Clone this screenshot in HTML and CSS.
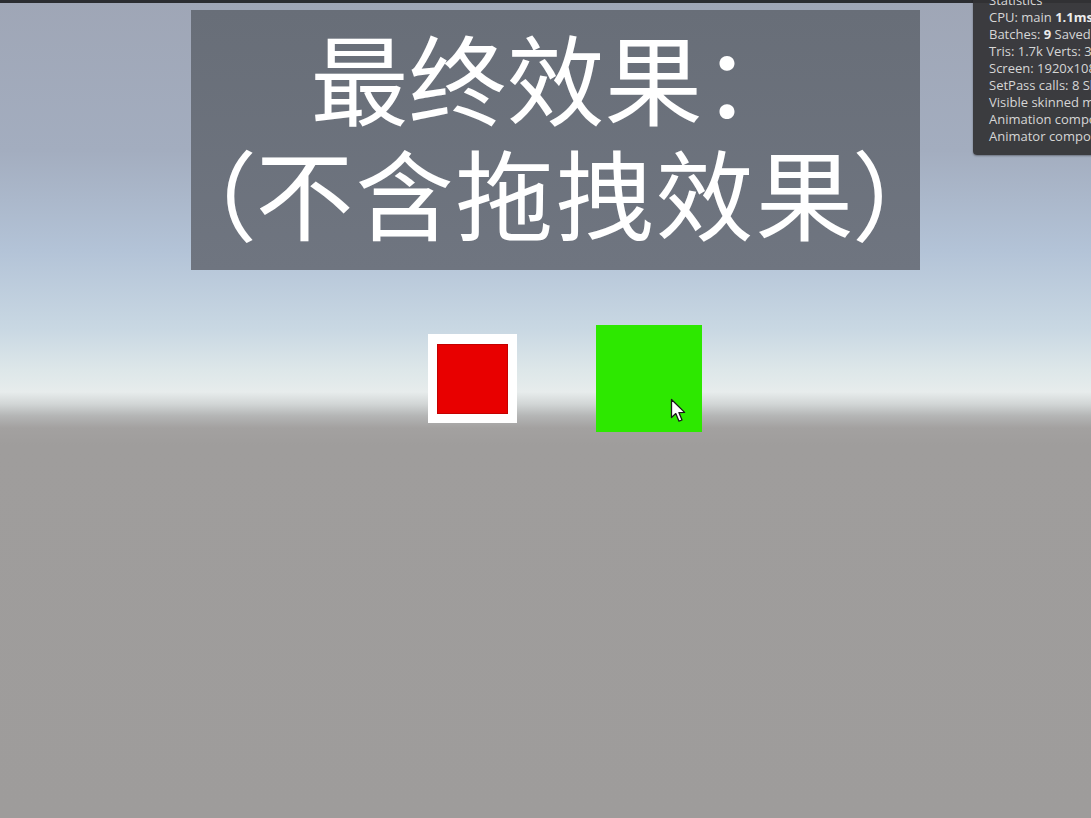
FILE: index.html
```html
<!DOCTYPE html>
<html lang="zh">
<head>
<meta charset="utf-8">
<title>最终效果</title>
<link rel="stylesheet" href="styles.css">
</head>
<body>
<div class="scene">
  <div class="topbar"></div>
  <div class="title-box">
    <p class="title-text">最终效果：<br><span class="second">（不含拖拽效果）</span></p>
  </div>
  <div class="items">
    <div class="slot"><div class="red"></div></div>
    <div class="green">
      <svg class="cursor" width="18" height="26" viewBox="0 0 18 26">
        <path d="M1.5 1.5 L1.5 19.5 L5.8 15.6 L9 23.2 L12 22 L8.9 14.6 L14.6 14.4 Z" fill="#ffffff" stroke="#1a1a1a" stroke-width="1.3" stroke-linejoin="round"/>
      </svg>
    </div>
  </div>
  <div class="stats">
    <div class="stat cut">Statistics</div>
    <div class="stat">CPU: main <b>1.1ms</b> render thread <b>0.4ms</b></div>
    <div class="stat">Batches: <b>9</b> Saved by batching: 0</div>
    <div class="stat">Tris: 1.7k Verts: 3.4k</div>
    <div class="stat">Screen: 1920x1080 - 23.7 MB</div>
    <div class="stat">SetPass calls: 8 Shadow casters: 0</div>
    <div class="stat">Visible skinned meshes: 0</div>
    <div class="stat">Animation components playing: 0</div>
    <div class="stat">Animator components playing: 0</div>
  </div>
</div>
</body>
</html>
```
FILE: styles.css
```css
html, body {
  margin: 0;
  padding: 0;
  width: 1091px;
  height: 818px;
  overflow: hidden;
}
.scene {
  position: relative;
  width: 1091px;
  height: 818px;
  overflow: hidden;
  display: flex;
  flex-direction: column;
  background: linear-gradient(to bottom,
    #9fa6b6 0px,
    #a3adbf 150px,
    #b3c3d7 250px,
    #c9d8e3 330px,
    #dde7e9 370px,
    #e7ecec 392px,
    #d2d6d6 404px,
    #b4b5b5 416px,
    #a3a1a0 428px,
    #9f9d9c 445px,
    #9e9c9b 818px);
}
.topbar {
  height: 3px;
  background: #2b2d31;
  flex: none;
}
.title-box {
  margin: 7px 0 0 191px;
  width: 729px;
  height: 260px;
  box-sizing: border-box;
  background: linear-gradient(to bottom, #686e78, #6f7580);
  color: #ffffff;
  font-family: "Noto Sans CJK SC", sans-serif;
  font-weight: 400;
  font-size: 98px;
  line-height: 115px;
  text-align: center;
  padding-top: 8px;
}
.title-text {
  margin: 0;
  white-space: nowrap;
}
.second {
  font-feature-settings: "palt";
  letter-spacing: 2px;
}
.items {
  display: flex;
  align-items: center;
  gap: 79px;
  margin: 55px 0 0 428px;
}
.slot {
  width: 89px;
  height: 89px;
  background: #ffffff;
  display: flex;
  align-items: center;
  justify-content: center;
}
.red {
  width: 71px;
  height: 70px;
  background: #e80000;
  box-shadow: inset 0 0 0 1px #c40000;
}
.green {
  width: 106px;
  height: 107px;
  background: #2de800;
  position: relative;
}
.cursor {
  position: absolute;
  left: 74px;
  top: 73px;
}
.stats {
  position: absolute;
  top: -10px;
  left: 973px;
  width: 200px;
  height: 165px;
  box-sizing: border-box;
  padding: 2px 0 0 16px;
  background: rgba(50, 50, 52, 0.92);
  border-radius: 0 0 0 4px;
  box-shadow: 0 1px 2px rgba(0,0,0,0.35);
  color: #d6d6d6;
  font-family: "Open Sans", "Noto Sans", sans-serif;
  font-size: 13px;
  line-height: 17px;
}
.stat {
  white-space: nowrap;
}
.stat b {
  color: #ececec;
  font-weight: 700;
}
```
